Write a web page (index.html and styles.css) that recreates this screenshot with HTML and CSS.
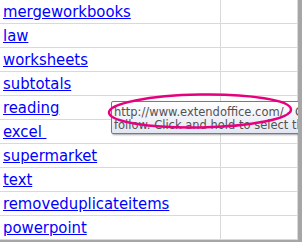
FILE: index.html
```html
<!DOCTYPE html>
<html lang="en">
<head>
    <meta charset="UTF-8">
    <title>Hyperlink list</title>
    <link rel="stylesheet" href="styles.css">
</head>
<body>
    <!-- Worksheet -->
    <div class="sheet">
        <div class="row"><div class="cell"><a href="#">mergeworkbooks</a></div><div class="cell"></div></div>
        <div class="row"><div class="cell"><a href="#">law</a></div><div class="cell"></div></div>
        <div class="row"><div class="cell"><a href="#">worksheets</a></div><div class="cell"></div></div>
        <div class="row"><div class="cell"><a href="#">subtotals</a></div><div class="cell"></div></div>
        <div class="row"><div class="cell"><a href="#">reading</a></div><div class="cell"></div></div>
        <div class="row"><div class="cell"><a href="#">excel&nbsp;</a></div><div class="cell"></div></div>
        <div class="row"><div class="cell"><a href="#">supermarket</a></div><div class="cell"></div></div>
        <div class="row"><div class="cell"><a href="#">text</a></div><div class="cell"></div></div>
        <div class="row"><div class="cell"><a href="#">removeduplicateitems</a></div><div class="cell"></div></div>
        <div class="row"><div class="cell"><a href="#">powerpoint</a></div><div class="cell"></div></div>

        <!-- Hyperlink tooltip -->
        <div class="tooltip">
            http://www.extendoffice.com/ - Click once to<br>
            follow. Click and hold to select this cell.
        </div>

        <!-- Highlight mark -->
        <svg class="mark" width="298" height="240" viewBox="0 0 298 240">
            <ellipse cx="200" cy="111" rx="91" ry="16.5" transform="rotate(-1 200 111)"
                     fill="none" stroke="#e6007e" stroke-width="2.5"/>
        </svg>
    </div>
</body>
</html>
```

FILE: styles.css
```css
/* General styling */
body {
    margin: 0;
    padding: 0;
    width: 302px;
    height: 242px;
    background-color: #a6a6a6;
    overflow: hidden;
}

/* Worksheet */
.sheet {
    position: relative;
    width: 298px;
    height: 240px;
    background-color: #ffffff;
    overflow: hidden;
}

.row {
    display: flex;
    height: 23px;
    border-bottom: 1px solid #d9d9d9;
}

.cell {
    flex: none;
    width: 221px;
    border-right: 1px solid #d9d9d9;
    padding-left: 3px;
    box-sizing: border-box;
    white-space: nowrap;
    font-family: "DejaVu Sans Condensed", "DejaVu Sans", sans-serif;
    font-size: 16.5px;
    line-height: 23px;
}

.cell + .cell {
    width: 77px;
    padding-left: 0;
}

.cell a {
    color: #0000ff;
    text-decoration: underline;
}

/* Tooltip */
.tooltip {
    position: absolute;
    left: 111px;
    top: 101px;
    width: 200px;
    height: 27px;
    padding: 4px 0 0 2px;
    border: 1px solid #7a7a7a;
    border-radius: 2px;
    background: linear-gradient(#ffffff, #e3e6f2);
    box-shadow: 1px 1px 2px rgba(0, 0, 0, 0.35);
    color: #525252;
    font-family: "DejaVu Sans", sans-serif;
    font-size: 11.5px;
    line-height: 12.5px;
    white-space: nowrap;
    overflow: hidden;
}

.mark {
    position: absolute;
    left: 0;
    top: 0;
    pointer-events: none;
}
```
